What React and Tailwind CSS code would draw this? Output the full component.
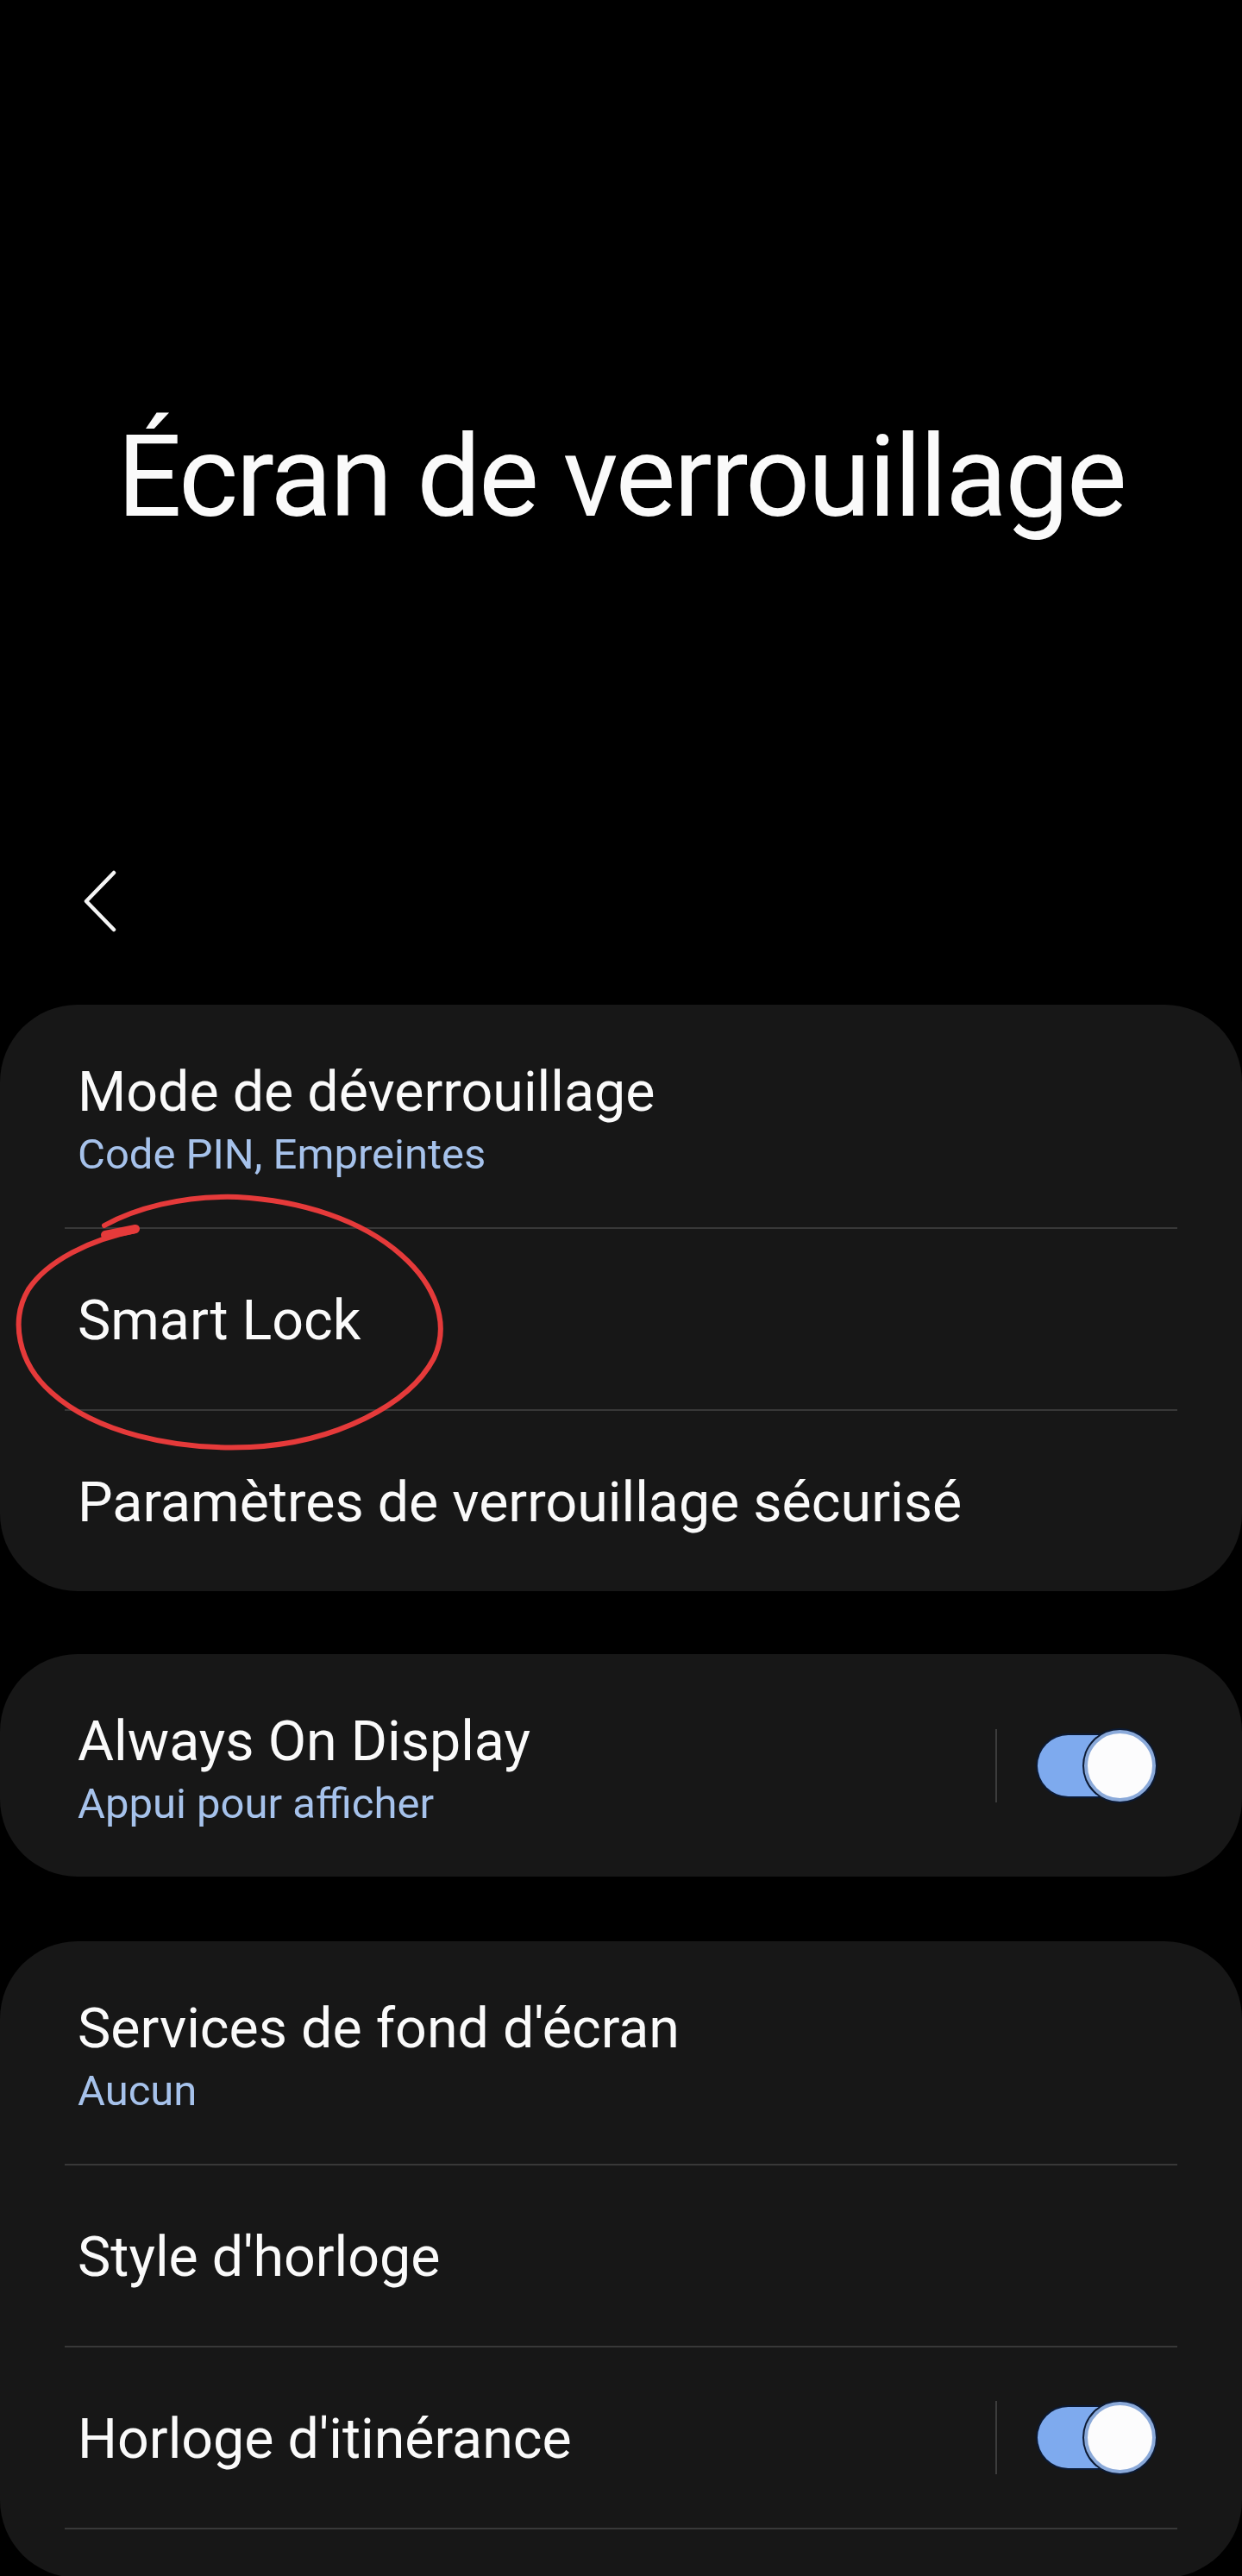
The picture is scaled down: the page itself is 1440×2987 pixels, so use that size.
import React from "react";

function Toggle() {
  return (
    <div className="flex items-center">
      <div className="w-[2px] h-[85px] bg-[#3c3c3c]" />
      <div className="relative ml-[47px] w-[137px] h-[83px]">
        <div className="absolute left-0 top-[6px] w-[118px] h-[71px] rounded-full bg-[#7eaaee] shadow-[0_0_0_2px_#0c1a33]" />
        <div className="absolute right-0 top-0 w-[83px] h-[83px] rounded-full bg-[#fcfcfd] border-[4px] border-[#8aa9d9] shadow-[0_0_0_2px_#0c1a33]" />
      </div>
    </div>
  );
}

function Divider() {
  return <div className="mx-[75px] h-[2px] bg-[#383838]" />;
}

function TwoLine({ title, sub, toggle }) {
  return (
    <div className="h-[258px] flex items-center justify-between pl-[90px] pr-[100px]">
      <div className="mt-[8px] flex flex-col gap-[6px]">
        <div className="text-[64.5px] leading-[76px] text-[#fafafa]">{title}</div>
        <div className="text-[49px] leading-[58px] text-[#a6c2eb]">{sub}</div>
      </div>
      {toggle && <Toggle />}
    </div>
  );
}

function OneLine({ title, toggle }) {
  return (
    <div className="h-[209px] flex items-center justify-between pl-[90px] pr-[100px]">
      <div className="mt-[2px] text-[64.5px] leading-[76px] text-[#fafafa]">{title}</div>
      {toggle && <Toggle />}
    </div>
  );
}

export default function App() {
  return (
    <div className="relative w-[1440px] h-[2987px] overflow-hidden bg-black font-[Roboto,sans-serif]">
      <div className="h-[1165px] flex flex-col">
        <div className="pt-[487px] text-center text-[132px] leading-[132px] tracking-[-2.5px] text-[#fafafa]">
          Écran de verrouillage
        </div>
        <div className="mt-[386px] ml-[92px]">
          <svg width="48" height="80" viewBox="0 0 48 80" fill="none">
            <path d="M40 7 L8 40 L40 73" stroke="#f5f5f5" strokeWidth="4.5" strokeLinecap="round" strokeLinejoin="round" />
          </svg>
        </div>
      </div>

      <div className="rounded-[90px] bg-[#171717]">
        <TwoLine title="Mode de déverrouillage" sub="Code PIN, Empreintes" />
        <Divider />
        <OneLine title="Smart Lock" />
        <Divider />
        <OneLine title="Paramètres de verrouillage sécurisé" />
      </div>

      <div className="mt-[73px] rounded-[90px] bg-[#171717]">
        <TwoLine title="Always On Display" sub="Appui pour afficher" toggle />
      </div>

      <div className="mt-[75px] rounded-[90px] bg-[#171717]">
        <TwoLine title="Services de fond d'écran" sub="Aucun" />
        <Divider />
        <OneLine title="Style d'horloge" />
        <Divider />
        <OneLine title="Horloge d'itinérance" toggle />
        <Divider />
        <div className="h-[56px]" />
      </div>

      <svg
        className="absolute left-0 top-[1370px] w-[540px] h-[330px] pointer-events-none"
        viewBox="0 1370 540 330"
        fill="none"
      >
        <path
          d="M157 1427 C 105 1437 55 1462 33 1495 C 12 1530 20 1580 60 1615 C 110 1660 200 1682 290 1678 C 390 1673 475 1628 503 1575 C 522 1535 505 1490 465 1455 C 420 1415 350 1392 275 1388 C 210 1386 155 1402 121 1421"
          stroke="#e53a3a"
          strokeWidth="6"
          strokeLinecap="round"
          strokeLinejoin="round"
        />
        <path d="M122 1432 L157 1425" stroke="#e53a3a" strokeWidth="10" strokeLinecap="round" />
      </svg>
    </div>
  );
}
